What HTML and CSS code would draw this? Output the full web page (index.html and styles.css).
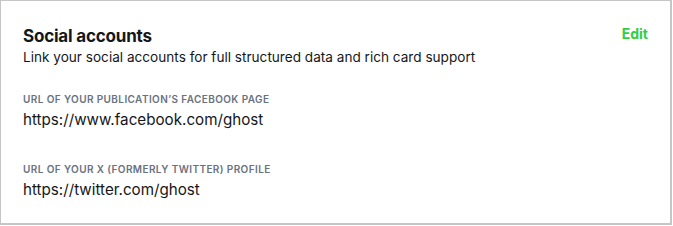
FILE: index.html
```html
<!DOCTYPE html>
<html>
<head>
<meta charset="utf-8">
<link rel="stylesheet" href="styles.css">
</head>
<body>
<section class="card">
  <header class="head">
    <div class="head-text">
      <h2 class="title">Social accounts</h2>
      <p class="desc">Link your social accounts for full structured data and rich card support</p>
    </div>
    <a class="edit" href="#">Edit</a>
  </header>
  <div class="fields">
    <div class="field">
      <div class="label">URL of your publication’s Facebook Page</div>
      <div class="value">https://www.facebook.com/ghost</div>
    </div>
    <div class="field">
      <div class="label">URL of your X (formerly Twitter) profile</div>
      <div class="value">https://twitter.com/ghost</div>
    </div>
  </div>
</section>
</body>
</html>
```
FILE: styles.css
```css
html, body {
  margin: 0;
  padding: 0;
  background: #fff;
}
body {
  font-family: Inter, "Noto Sans", sans-serif;
  color: #15171a;
}
.card {
  box-sizing: border-box;
  width: 672px;
  height: 225px;
  border: 1px solid #c6c6c6;
  border-right-width: 2px;
  border-bottom-width: 2px;
  padding: 24px 22px 0 22px;
}
.head {
  display: flex;
  justify-content: space-between;
  align-items: flex-start;
}
.title {
  margin: 0;
  font-size: 17px;
  font-weight: 700;
  line-height: 22px;
  letter-spacing: -0.2px;
}
.desc {
  margin: 0;
  font-size: 13.6px;
  line-height: 20px;
  color: #15171a;
}
.edit {
  font-size: 14px;
  font-weight: 700;
  color: #30cf43;
  text-decoration: none;
  line-height: 20px;
  margin-top: -1px;
}
.fields {
  display: flex;
  flex-direction: column;
  gap: 31px;
  margin-top: 25px;
}
.label {
  font-size: 10px;
  font-weight: 600;
  text-transform: uppercase;
  letter-spacing: 0.4px;
  color: #687281;
  line-height: 14px;
}
.value {
  margin-top: 3px;
  font-size: 15.2px;
  line-height: 22px;
}
```
